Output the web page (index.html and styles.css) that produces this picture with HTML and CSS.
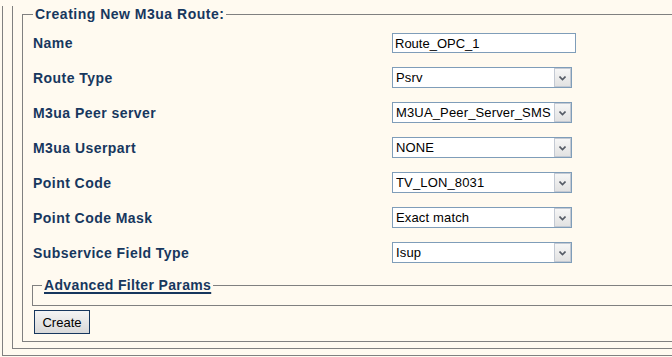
FILE: index.html
```html
<!DOCTYPE html>
<html>
<head>
<meta charset="utf-8">
<link rel="stylesheet" href="styles.css">
</head>
<body>
<div class="outer">
  <div class="mid">
    <fieldset class="main">
      <legend class="main-legend">Creating New M3ua Route:</legend>
      <div class="form-grid">
        <label class="lbl">Name</label>
        <div class="ctl"><input class="txt" type="text" value="Route_OPC_1"></div>

        <label class="lbl">Route Type</label>
        <div class="ctl"><div class="sel"><select><option>Psrv</option></select></div></div>

        <label class="lbl">M3ua Peer server</label>
        <div class="ctl"><div class="sel"><select><option>M3UA_Peer_Server_SMS</option></select></div></div>

        <label class="lbl">M3ua Userpart</label>
        <div class="ctl"><div class="sel"><select><option>NONE</option></select></div></div>

        <label class="lbl">Point Code</label>
        <div class="ctl"><div class="sel"><select><option>TV_LON_8031</option></select></div></div>

        <label class="lbl">Point Code Mask</label>
        <div class="ctl"><div class="sel"><select><option>Exact match</option></select></div></div>

        <label class="lbl">Subservice Field Type</label>
        <div class="ctl"><div class="sel"><select><option>Isup</option></select></div></div>
      </div>
      <fieldset class="adv">
        <legend class="adv-legend"><a href="#" class="adv-link">Advanced Filter Params</a></legend>
      </fieldset>
      <button class="btn" type="button">Create</button>
    </fieldset>
  </div>
</div>
</body>
</html>
```

FILE: styles.css
```css
html, body {
  margin: 0;
  padding: 0;
  background: #fffaf0;
  overflow: hidden;
  height: 357px;
}

body {
  font-family: "Liberation Sans", Arial, sans-serif;
  color: #000;
}

.outer {
  margin-left: 2px;
  width: 900px;
  border-left: 1px solid #808080;
  border-bottom: 1px solid #808080;
  padding: 0 0 6px 9px;
}

.mid {
  border-left: 1px solid #808080;
  border-bottom: 1px solid #808080;
  padding: 0 0 6px 9px;
}

.main {
  margin: 6px 0 0 0;
  border: 1px solid #808080;
  padding: 0 10px 7px 10px;
}

.main-legend {
  padding: 0 2px;
  font-size: 14px;
  font-weight: bold;
  letter-spacing: 0.5px;
  color: #17375e;
  line-height: 17px;
}

.form-grid {
  display: grid;
  grid-template-columns: 359px auto;
  grid-template-rows: 34px repeat(6, 35px);
  align-items: center;
  margin-top: 3px;
}

.lbl {
  font-size: 14px;
  font-weight: bold;
  letter-spacing: 0.45px;
  color: #17375e;
}

.ctl {
  display: flex;
  align-items: center;
}

.txt {
  box-sizing: border-box;
  width: 184px;
  height: 20px;
  margin: 0;
  border: 1px solid #7f9db9;
  padding: 0 2px;
  font-family: "Liberation Sans", Arial, sans-serif;
  font-size: 13px;
  color: #000;
  background: #fff;
  outline: none;
}

.sel {
  position: relative;
  width: 180px;
  height: 21px;
}

.sel select {
  -webkit-appearance: none;
  appearance: none;
  box-sizing: border-box;
  width: 180px;
  height: 21px;
  margin: 0;
  border: 1px solid #7f9db9;
  border-radius: 0;
  padding: 0 0 0 3px;
  font-family: "Liberation Sans", Arial, sans-serif;
  font-size: 13px;
  letter-spacing: 0.15px;
  color: #000;
  background: #fff;
  outline: none;
}

.sel::after {
  content: "";
  position: absolute;
  top: 1px;
  right: 1px;
  width: 15px;
  height: 17px;
  border: 1px solid #c3c9d3;
  background-color: #ececec;
  background-image:
    url("data:image/svg+xml,%3Csvg xmlns='http://www.w3.org/2000/svg' width='7' height='5' viewBox='0 0 7 5'%3E%3Cpath d='M0.5 0.5 L3.5 3.5 L6.5 0.5' fill='none' stroke='%23555b66' stroke-width='1.6'/%3E%3C/svg%3E"),
    linear-gradient(#f6f6f6, #e2e2e2);
  background-repeat: no-repeat, no-repeat;
  background-position: center 7px, 0 0;
  pointer-events: none;
}

.adv {
  margin: 6px 0 0 -1px;
  border: 1px solid #808080;
  padding: 0 9px 11px 9px;
}

.adv-legend {
  padding: 0 2px;
  line-height: 17px;
}

.adv-link {
  font-size: 14px;
  font-weight: bold;
  letter-spacing: 0.35px;
  color: #17375e;
  text-decoration: underline;
  text-decoration-thickness: 2px;
  text-underline-offset: 2px;
}

.btn {
  display: block;
  margin: 4px 0 0 1px;
  width: 56px;
  height: 24px;
  padding: 0;
  border: 1px solid #17375e;
  background: linear-gradient(#f4f4f4, #d9d9d9);
  font-family: "Liberation Sans", Arial, sans-serif;
  font-size: 13px;
  color: #000;
}
```
